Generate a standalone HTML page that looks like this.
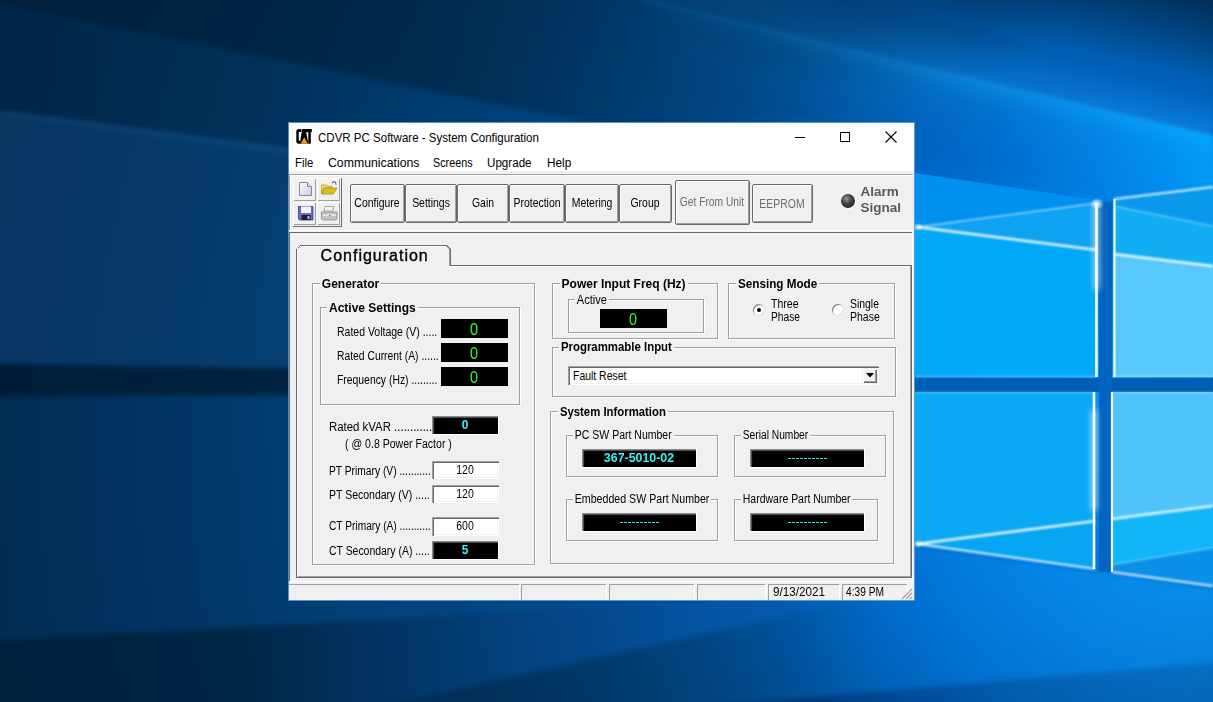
<!DOCTYPE html>
<html><head><meta charset="utf-8"><style>
html,body{margin:0;padding:0;}
body{width:1213px;height:702px;overflow:hidden;position:relative;font-family:"Liberation Sans", sans-serif;background:#03407e;}
.r{position:absolute;}
.t{position:absolute;white-space:nowrap;line-height:1;}
.btn{border:1px solid #6a6a6a;border-radius:2px;background:#f0f0f0;box-shadow:inset 1px 1px 0 #fff, inset -1px -1px 0 #a0a0a0;}
</style></head><body>
<svg class="r" style="left:-20px;top:-20px;filter:blur(2.5px)" width="1253" height="742" viewBox="-20 -20 1253 742">
<defs>
<filter id="b1" x="-5%" y="-50%" width="110%" height="200%"><feGaussianBlur stdDeviation="1"/></filter>
<radialGradient id="gBase" gradientUnits="userSpaceOnUse" cx="1105" cy="395" r="1120">
 <stop offset="0" stop-color="#0096f4"/><stop offset="0.12" stop-color="#007ee4"/><stop offset="0.25" stop-color="#0068c6"/>
 <stop offset="0.42" stop-color="#004f94"/><stop offset="0.62" stop-color="#003e74"/><stop offset="0.82" stop-color="#00335f"/><stop offset="1" stop-color="#002c54"/>
</radialGradient>
<linearGradient id="gTopDark" gradientUnits="userSpaceOnUse" x1="0" y1="0" x2="1213" y2="0">
 <stop offset="0" stop-color="#000" stop-opacity="0.28"/><stop offset="0.35" stop-color="#000" stop-opacity="0.28"/><stop offset="0.6" stop-color="#000" stop-opacity="0.12"/><stop offset="0.76" stop-color="#000" stop-opacity="0.0"/><stop offset="1" stop-color="#000" stop-opacity="0"/>
</linearGradient>
<linearGradient id="gAbD" gradientUnits="userSpaceOnUse" x1="900" y1="0" x2="1213" y2="0">
 <stop offset="0" stop-color="#000" stop-opacity="0"/><stop offset="1" stop-color="#000" stop-opacity="0.3"/>
</linearGradient>
<linearGradient id="gAbD2" gradientUnits="userSpaceOnUse" x1="1180" y1="128" x2="1210" y2="1.5">
 <stop offset="0" stop-color="#000" stop-opacity="0"/><stop offset="0.4" stop-color="#000" stop-opacity="0.03"/><stop offset="0.7" stop-color="#000" stop-opacity="0.25"/><stop offset="1" stop-color="#000" stop-opacity="0.45"/>
</linearGradient>
<linearGradient id="gBeamD" gradientUnits="userSpaceOnUse" x1="1180" y1="128" x2="1161" y2="206">
 <stop offset="0" stop-color="#10b0ff" stop-opacity="0.85"/><stop offset="0.3" stop-color="#10a0ff" stop-opacity="0.4"/><stop offset="1" stop-color="#1090ff" stop-opacity="0"/>
</linearGradient>
<linearGradient id="gBeamU" gradientUnits="userSpaceOnUse" x1="1180" y1="128" x2="1190" y2="90">
 <stop offset="0" stop-color="#1890f0" stop-opacity="0.5"/><stop offset="1" stop-color="#1890f0" stop-opacity="0"/>
</linearGradient>
<linearGradient id="gFadeL" gradientUnits="userSpaceOnUse" x1="642" y1="0" x2="1213" y2="0">
 <stop offset="0" stop-color="#fff" stop-opacity="0"/><stop offset="0.5" stop-color="#fff" stop-opacity="0.5"/><stop offset="1" stop-color="#fff" stop-opacity="1"/>
</linearGradient>
<mask id="mFadeL" maskUnits="userSpaceOnUse" x="0" y="-50" width="1213" height="400"><rect x="0" y="-50" width="1213" height="400" fill="url(#gFadeL)"/></mask>
<linearGradient id="gStreak" gradientUnits="userSpaceOnUse" x1="250" y1="0" x2="890" y2="0">
 <stop offset="0" stop-color="#0a64c8" stop-opacity="0"/><stop offset="0.7" stop-color="#0a64c8" stop-opacity="0.45"/><stop offset="1" stop-color="#0a64c8" stop-opacity="0.3"/>
</linearGradient>
<linearGradient id="gCA" gradientUnits="userSpaceOnUse" x1="0" y1="0" x2="917" y2="0">
 <stop offset="0" stop-color="#000" stop-opacity="0.14"/><stop offset="0.5" stop-color="#000" stop-opacity="0"/><stop offset="1" stop-color="#000" stop-opacity="0"/>
</linearGradient>
<linearGradient id="gShB" gradientUnits="userSpaceOnUse" x1="0" y1="0" x2="917" y2="0">
 <stop offset="0" stop-color="#1060c0" stop-opacity="0"/><stop offset="0.4" stop-color="#1060c0" stop-opacity="0.15"/><stop offset="1" stop-color="#1060c0" stop-opacity="0.1"/>
</linearGradient>
<radialGradient id="gBlob">
 <stop offset="0" stop-color="#000" stop-opacity="0.16"/><stop offset="0.6" stop-color="#000" stop-opacity="0.1"/><stop offset="1" stop-color="#000" stop-opacity="0"/>
</radialGradient>
<radialGradient id="gGlowTR" gradientUnits="userSpaceOnUse" cx="1213" cy="175" r="230">
 <stop offset="0" stop-color="#00a8ff" stop-opacity="0.75"/><stop offset="0.5" stop-color="#0098ff" stop-opacity="0.35"/><stop offset="1" stop-color="#0090ff" stop-opacity="0"/>
</radialGradient>
<linearGradient id="gBand" gradientUnits="userSpaceOnUse" x1="0" y1="0" x2="915" y2="0">
 <stop offset="0" stop-color="#000" stop-opacity="0.38"/><stop offset="0.32" stop-color="#000" stop-opacity="0.38"/><stop offset="1" stop-color="#000" stop-opacity="0.15"/>
</linearGradient>
<linearGradient id="gBot" gradientUnits="userSpaceOnUse" x1="0" y1="0" x2="1213" y2="0">
 <stop offset="0" stop-color="#000" stop-opacity="0.3"/><stop offset="0.5" stop-color="#000" stop-opacity="0.2"/><stop offset="0.72" stop-color="#000" stop-opacity="0"/><stop offset="1" stop-color="#000" stop-opacity="0"/>
</linearGradient>
<linearGradient id="gShaftA" gradientUnits="userSpaceOnUse" x1="0" y1="0" x2="915" y2="0">
 <stop offset="0" stop-color="#3a8ae0" stop-opacity="0.10"/><stop offset="1" stop-color="#3a8ae0" stop-opacity="0.05"/>
</linearGradient>
<radialGradient id="gLR" gradientUnits="userSpaceOnUse" cx="1213" cy="560" r="420">
 <stop offset="0" stop-color="#10a8ff" stop-opacity="0.55"/><stop offset="0.6" stop-color="#0898ff" stop-opacity="0.25"/><stop offset="1" stop-color="#0080ff" stop-opacity="0"/>
</radialGradient>
<filter id="b3" x="-200%" y="-20%" width="500%" height="140%"><feGaussianBlur stdDeviation="2.5"/></filter>
<linearGradient id="gAbTR" gradientUnits="userSpaceOnUse" x1="1097" y1="0" x2="1213" y2="0">
 <stop offset="0" stop-color="#0a80e4" stop-opacity="0.6"/><stop offset="1" stop-color="#00a0fa"/>
</linearGradient>
<linearGradient id="pTL" gradientUnits="userSpaceOnUse" x1="915" y1="200" x2="1097" y2="377">
 <stop offset="0" stop-color="#109ae8"/><stop offset="0.35" stop-color="#00a6f6"/><stop offset="1" stop-color="#02a8f8"/>
</linearGradient>
<linearGradient id="pTR" gradientUnits="userSpaceOnUse" x1="1113" y1="190" x2="1213" y2="377">
 <stop offset="0" stop-color="#30b8f8"/><stop offset="1" stop-color="#5ac8fc"/>
</linearGradient>
<linearGradient id="pBL" gradientUnits="userSpaceOnUse" x1="915" y1="392" x2="1095" y2="569">
 <stop offset="0" stop-color="#06a8f8"/><stop offset="1" stop-color="#00a8fa"/>
</linearGradient>
<linearGradient id="pBR" gradientUnits="userSpaceOnUse" x1="1112" y1="392" x2="1213" y2="585">
 <stop offset="0" stop-color="#48c2fa"/><stop offset="1" stop-color="#2ab0f6"/>
</linearGradient>
</defs>
<rect x="-20" y="-20" width="1253" height="742" fill="url(#gBase)"/>
<path d="M-10 -10 H1223 V247 L917 189 L-10 2 Z" fill="url(#gTopDark)"/>
<ellipse cx="870" cy="20" rx="200" ry="70" fill="url(#gBlob)"/>
<path d="M642 0 L1223 138 V-10 H642 Z" fill="url(#gAbD2)"/>
<path d="M642 0 L1223 138 L1223 300 L642 120 Z" fill="url(#gBeamD)" mask="url(#mFadeL)"/>
<path d="M642 0 L1223 138 L1223 50 L642 -40 Z" fill="url(#gBeamU)" mask="url(#mFadeL)"/>
<path d="M-10 2 L917 189 L917 227 L-10 112 Z" fill="url(#gCA)"/>
<path d="M-10 396 L915 392 L917 556 L750 600 L150 632 L-10 641 Z" fill="url(#gShB)"/>
<path d="M-10 112 L917 227 L917 377 L-10 364 Z" fill="url(#gShaftA)"/>
<path d="M-10 364 L917 377 L917 392 L-10 396 Z" fill="url(#gBand)"/>
<path d="M-10 641 L150 632 L750 600 L917 556 L1223 590 V712 H-10 Z" fill="url(#gBot)"/>
<path d="M150 632 L750 600 L890 593 L750 624 L400 702 L150 760 Z" fill="url(#gStreak)"/>
<path d="M640 712 L1223 662 V712 Z" fill="#001040" opacity="0.36"/>
<path d="M600 599 L917 548 L1223 590 V712 H600 Z" fill="url(#gLR)"/>
<g fill="none" filter="url(#b1)">
<path d="M0 112 L288 150" stroke="#3a80c8" stroke-width="2" opacity="0.5"/>
<path d="M642 0 L1213 136" stroke="#40a8ff" stroke-width="2" opacity="0.25"/>
</g>
</svg>
<svg class="r" style="left:0;top:0" width="1213" height="702" viewBox="0 0 1213 702"><defs><filter id="b1b" x="-5%" y="-50%" width="110%" height="200%"><feGaussianBlur stdDeviation="1"/></filter><filter id="b3b" filterUnits="userSpaceOnUse" x="880" y="150" width="340" height="480"><feGaussianBlur stdDeviation="3"/></filter><radialGradient id="gSpot"><stop offset="0" stop-color="#fff" stop-opacity="1"/><stop offset="0.4" stop-color="#fff" stop-opacity="0.6"/><stop offset="1" stop-color="#fff" stop-opacity="0"/></radialGradient></defs>

<path d="M950 73 L1213 136 L1213 187 L1113 200 L1097 202 L915 173 L915 65 Z" fill="url(#gGlowTR)"/>
<path d="M915 173 L1097 200 L1097 205 L915 227 Z" fill="#0090f0"/>

<path d="M915 227 L1097 203 L1097 377 L915 377 Z" fill="#02a8f8"/>
<path d="M915 227 L1097 203 L1097 250 Z" fill="#10a2f2"/>
<path d="M1113 200 L1213 187 L1213 377 L1113 377 Z" fill="#58c8fc"/>
<path d="M1113 200 L1213 187 L1213 266 L1113 254 Z" fill="#12aef4"/>
<path d="M1113 200 L1213 187 L1213 226 L1113 205 Z" fill="#0a98ec"/>
<path d="M915 392 L1095 392 L1095 569 L915 544 Z" fill="#06a6f4"/>
<path d="M915 392 L1095 392 L1095 521 L915 544 Z" fill="#0aa8f6"/>
<path d="M1112 392 L1213 392 L1213 585 L1112 571 Z" fill="#0a90e8"/>
<path d="M1112 392 L1213 392 L1213 548 L1112 565 Z" fill="#10b6f8"/>
<path d="M1112 392 L1213 392 L1213 506 L1112 519 Z" fill="#50c4fa"/>
<rect x="915" y="378" width="300" height="14" fill="#005eb4"/>
<rect x="1099" y="202" width="13" height="370" fill="#0064c0"/>
<g stroke="#ffffff" fill="none" filter="url(#b1)">
<path d="M917 227 L1097 250" stroke-width="2.6" opacity="0.9"/>
<path d="M1114 254 L1213 266" stroke-width="2.6" opacity="0.9"/>
<path d="M917 544 L1095 521" stroke-width="2.6" opacity="0.9"/>
<path d="M1112 519 L1213 506" stroke-width="2.6" opacity="0.85"/>
<path d="M917 227 L1097 203" stroke-width="1.6" opacity="0.55"/>
<path d="M1114 199 L1213 187" stroke-width="2" opacity="0.85"/>
<path d="M917 544 L1095 569" stroke-width="2" opacity="0.85"/>
<path d="M1112 572 L1213 586" stroke-width="2.2" opacity="0.9"/>
<path d="M1114 206 L1213 226" stroke-width="2" opacity="0.25"/>
<path d="M1112 565 L1213 548" stroke-width="2" opacity="0.25"/>
<path d="M915 392.5 L1095 392.5" stroke-width="1.2" opacity="0.45"/>
<path d="M1112 392.5 L1213 392.5" stroke-width="1.2" opacity="0.5"/>
<path d="M915 376.5 L1097 376.5" stroke-width="1.2" opacity="0.45"/>
<path d="M1113 376.5 L1213 376.5" stroke-width="1.2" opacity="0.5"/>
</g>
<g stroke="#ffffff" fill="none">
<path d="M1096.5 203 L1096.5 377" stroke-width="2.6" opacity="1"/>
<path d="M1114.5 199 L1114.5 377" stroke-width="2.2" opacity="0.95"/>
<path d="M1094 392 L1094 569" stroke-width="2.6" opacity="1"/>
<path d="M1112 392 L1112 572" stroke-width="2.2" opacity="0.95"/>
</g>
<g fill="none" filter="url(#b3b)">
<path d="M1096.5 205 L1096.5 290" stroke="#ffffff" stroke-width="5" opacity="0.7"/>
<path d="M1094 410 L1094 510" stroke="#ffffff" stroke-width="5" opacity="0.7"/>
</g>
<ellipse cx="1097" cy="204" rx="7" ry="6" fill="url(#gSpot)"/>
<ellipse cx="918" cy="227" rx="6" ry="4" fill="url(#gSpot)" opacity="0.8"/>
<ellipse cx="918" cy="544" rx="6" ry="4" fill="url(#gSpot)" opacity="0.8"/>
</svg>
<div class="r" style="left:289px;top:123px;width:625px;height:477px;background:#f0f0f0;box-shadow:0 0 0 1px rgba(110,175,230,0.75);"></div>
<div class="r" style="left:289px;top:123px;width:625px;height:48px;background:#fff;"></div>
<svg class="r" style="left:296px;top:129px" width="17" height="16" viewBox="0 0 17 16">
<path d="M0.3 2.5 Q0.3 0 2.8 0 H5.4 V3 H2.8 V11.8 H4.6 V14.7 H2.8 Q0.3 14.7 0.3 12.2 Z" fill="#000"/>
<path d="M3.8 14.7 L6.2 0 H9.6 L12.4 14.7 Z" fill="#000"/>
<path d="M4.6 14.7 L8.2 8.2 L11.8 14.7 Z" fill="#f39c12"/>
<path d="M9.4 0 H15.8 V3.3 H14.8 V14.7 H12.3 V3.3 H9.4 Z" fill="#000"/>
</svg>
<div class="t" style="left:317.60px;top:131.50px;font-size:12.40px;color:#000;transform:scaleX(0.930);transform-origin:left top;">CDVR PC Software - System Configuration</div>
<div class="r" style="left:795px;top:137px;width:10px;height:1px;background:#000;"></div>
<div class="r" style="left:840px;top:132px;width:8px;height:8px;border:1px solid #000;"></div>
<svg class="r" style="left:885px;top:131px" width="12" height="12" viewBox="0 0 12 12"><path d="M0.5 0.5 L11.5 11.5 M11.5 0.5 L0.5 11.5" stroke="#000" stroke-width="1.1"/></svg>
<div class="t" style="left:295.30px;top:156.59px;font-size:12.30px;color:#000;transform:scaleX(0.918);transform-origin:left top;">File</div>
<div class="t" style="left:327.50px;top:156.59px;font-size:12.30px;color:#000;transform:scaleX(0.999);transform-origin:left top;">Communications</div>
<div class="t" style="left:433.00px;top:156.59px;font-size:12.30px;color:#000;transform:scaleX(0.878);transform-origin:left top;">Screens</div>
<div class="t" style="left:487.40px;top:156.59px;font-size:12.30px;color:#000;transform:scaleX(0.945);transform-origin:left top;">Upgrade</div>
<div class="t" style="left:546.50px;top:156.59px;font-size:12.30px;color:#000;transform:scaleX(0.961);transform-origin:left top;">Help</div>
<div class="r" style="left:289px;top:174px;width:624px;height:1px;background:#a0a0a0;"></div>
<div class="r" style="left:289px;top:174px;width:1px;height:56px;background:#a0a0a0;"></div>
<div class="r" style="left:290px;top:175px;width:623px;height:1px;background:#ffffff;"></div>
<div class="r" style="left:290px;top:175px;width:1px;height:55px;background:#ffffff;"></div>
<div class="r" style="left:289px;top:230px;width:624px;height:1px;background:#ffffff;"></div>
<div class="r" style="left:293px;top:178px;width:23px;height:23px;background:#f0f0f0;box-shadow:inset 1px 1px 0 #fff, inset -1px -1px 0 #a0a0a0;"></div>
<div class="r" style="left:317px;top:178px;width:23px;height:23px;background:#f0f0f0;box-shadow:inset 1px 1px 0 #fff, inset -1px -1px 0 #a0a0a0;"></div>
<div class="r" style="left:293px;top:202px;width:23px;height:23px;background:#f0f0f0;box-shadow:inset 1px 1px 0 #fff, inset -1px -1px 0 #a0a0a0;"></div>
<div class="r" style="left:317px;top:202px;width:23px;height:23px;background:#f0f0f0;box-shadow:inset 1px 1px 0 #fff, inset -1px -1px 0 #a0a0a0;"></div>
<div class="r" style="left:293px;top:226px;width:49px;height:1px;background:#696969;"></div>
<div class="r" style="left:341px;top:178px;width:1px;height:49px;background:#696969;"></div>
<svg class="r" style="left:298px;top:181px" width="16" height="16" viewBox="0 0 16 16">
<defs><linearGradient id="gd" x1="0" y1="0" x2="1" y2="1"><stop offset="0" stop-color="#fff"/><stop offset="1" stop-color="#c8c8e8"/></linearGradient></defs>
<path d="M1.5 1.5 H9.5 L13.5 5.5 V14.5 H1.5 Z" fill="url(#gd)" stroke="#8a8a8a"/>
<path d="M9.5 1.5 V5.5 H13.5" fill="#e0e0e0" stroke="#8a8a8a"/>
</svg>
<svg class="r" style="left:321px;top:180px" width="17" height="16" viewBox="0 0 17 16">
<path d="M11 3 Q13 0.5 15 3" fill="none" stroke="#3a50a0" stroke-width="1.1"/><path d="M14 2.5 L16 4.5 L14.5 4.8 Z" fill="#3a50a0"/>
<path d="M0.5 5 H5 L6 6 H11 V8 H3 L0.5 14 Z" fill="#f4e06a" stroke="#b8a020" stroke-width="0.8"/>
<path d="M3 8 H16 L12.5 14 H0.5 Z" fill="#d8c020" stroke="#a89010" stroke-width="0.8"/>
</svg>
<svg class="r" style="left:298px;top:205px" width="16" height="16" viewBox="0 0 16 16">
<path d="M0.5 1.5 H15 V15 H1.5 L0.5 14 Z" fill="#6a6cc0" stroke="#3c3e80" stroke-width="0.8"/>
<rect x="3" y="1.5" width="10" height="6.5" fill="#f4f4f8"/>
<rect x="3.5" y="10" width="9" height="5" fill="#1e1e3c"/>
<rect x="9.5" y="11" width="2" height="3" fill="#c0c0d0"/>
</svg>
<svg class="r" style="left:321px;top:205px" width="17" height="16" viewBox="0 0 17 16">
<path d="M4 1.5 H13 L12 6 H3 Z" fill="#f0f0f0" stroke="#9a9a9a" stroke-width="0.8"/>
<path d="M0.5 7 H16 V13 Q16 15 14 15 H2.5 Q0.5 15 0.5 13 Z" fill="#c4c4c4" stroke="#8a8a8a" stroke-width="0.8"/>
<rect x="2" y="9.5" width="13" height="1.5" fill="#e8e8e8"/>
<rect x="8" y="10" width="1.5" height="1.2" fill="#30a030"/>
</svg>
<div class="r btn" style="left:350px;top:184px;width:53px;height:37px;"></div>
<div class="t" style="left:377.00px;top:196.84px;font-size:12.00px;color:#000;transform:translateX(-50%) scaleX(0.870);transform-origin:center top;">Configure</div>
<div class="r btn" style="left:405px;top:184px;width:50px;height:37px;"></div>
<div class="t" style="left:430.50px;top:196.84px;font-size:12.00px;color:#000;transform:translateX(-50%) scaleX(0.870);transform-origin:center top;">Settings</div>
<div class="r btn" style="left:457px;top:184px;width:50px;height:37px;"></div>
<div class="t" style="left:482.50px;top:196.84px;font-size:12.00px;color:#000;transform:translateX(-50%) scaleX(0.870);transform-origin:center top;">Gain</div>
<div class="r btn" style="left:509px;top:184px;width:54px;height:37px;"></div>
<div class="t" style="left:536.50px;top:196.84px;font-size:12.00px;color:#000;transform:translateX(-50%) scaleX(0.870);transform-origin:center top;">Protection</div>
<div class="r btn" style="left:565px;top:184px;width:52px;height:37px;"></div>
<div class="t" style="left:591.50px;top:196.84px;font-size:12.00px;color:#000;transform:translateX(-50%) scaleX(0.870);transform-origin:center top;">Metering</div>
<div class="r btn" style="left:619px;top:184px;width:51px;height:37px;"></div>
<div class="t" style="left:645.00px;top:196.84px;font-size:12.00px;color:#000;transform:translateX(-50%) scaleX(0.870);transform-origin:center top;">Group</div>
<div class="r btn" style="left:675px;top:180px;width:73px;height:43px;"></div>
<div class="t" style="left:712.00px;top:196.34px;font-size:12.00px;color:#6d6d6d;transform:translateX(-50%) scaleX(0.853);transform-origin:center top;">Get From Unit</div>
<div class="r btn" style="left:752px;top:184px;width:59px;height:37px;"></div>
<div class="t" style="left:782.00px;top:197.84px;font-size:12.00px;color:#6d6d6d;transform:translateX(-50%) scaleX(0.870);transform-origin:center top;">EEPROM</div>
<div class="r" style="left:841px;top:194px;width:14px;height:14px;border-radius:50%;background:radial-gradient(circle at 40% 35%, #9a9a9a 0, #4a4a4a 35%, #2a2a2a 70%, #6a6a6a 100%);box-shadow:1px 1px 1px #fff;"></div>
<div class="t" style="left:860.50px;top:185.27px;font-size:13.50px;color:#5a5a5a;font-weight:bold;">Alarm</div>
<div class="t" style="left:860.50px;top:200.57px;font-size:13.50px;color:#5a5a5a;font-weight:bold;">Signal</div>
<div class="r" style="left:289px;top:232px;width:624px;height:1px;background:#696969;"></div>
<div class="r" style="left:289px;top:232px;width:1px;height:349px;background:#696969;"></div>
<div class="r" style="left:289px;top:581px;width:624px;height:1px;background:#ffffff;"></div>
<div class="r" style="left:912px;top:232px;width:1px;height:350px;background:#ffffff;"></div>
<div class="r" style="left:296px;top:265px;width:616px;height:1px;background:#696969;"></div>
<div class="r" style="left:297px;top:266px;width:614px;height:1px;background:#ffffff;"></div>
<div class="r" style="left:297px;top:266px;width:1px;height:311px;background:#ffffff;"></div>
<div class="r" style="left:296px;top:249px;width:1px;height:329px;background:#696969;"></div>
<div class="r" style="left:297px;top:577px;width:615px;height:1px;background:#696969;"></div>
<div class="r" style="left:298px;top:576px;width:613px;height:1px;background:#a0a0a0;"></div>
<div class="r" style="left:911px;top:265px;width:1px;height:313px;background:#696969;"></div>
<div class="r" style="left:910px;top:266px;width:1px;height:311px;background:#a0a0a0;"></div>
<div class="r" style="left:297px;top:246px;width:153px;height:20px;background:#f0f0f0;"></div>
<div class="r" style="left:300px;top:245px;width:147px;height:1px;background:#696969;"></div>
<div class="r" style="left:300px;top:246px;width:147px;height:1px;background:#ffffff;"></div>
<div class="r" style="left:297px;top:249px;width:1px;height:17px;background:#ffffff;"></div>
<svg class="r" style="left:296px;top:245px" width="5" height="5"><path d="M0.5 4.5 L4.5 0.5" stroke="#696969" stroke-width="1"/></svg>
<svg class="r" style="left:446px;top:245px" width="6" height="6"><path d="M0.5 0.5 L4.5 4.5" stroke="#696969" stroke-width="1.2"/></svg>
<div class="r" style="left:450px;top:249px;width:1px;height:17px;background:#696969;"></div>
<div class="r" style="left:449px;top:249px;width:1px;height:17px;background:#a0a0a0;"></div>
<div class="r" style="left:297px;top:265px;width:152px;height:2px;background:#f0f0f0;"></div>
<div class="r" style="left:297px;top:247px;width:1px;height:20px;background:#ffffff;"></div>
<div class="t" style="left:320.60px;top:248.26px;font-size:16.00px;color:#000;letter-spacing:1.00px;-webkit-text-stroke:0.35px #000;">Configuration</div>
<div class="r" style="left:313px;top:284px;width:223px;height:1px;background:#ffffff;"></div>
<div class="r" style="left:313px;top:284px;width:1px;height:282px;background:#ffffff;"></div>
<div class="r" style="left:313px;top:565px;width:223px;height:1px;background:#ffffff;"></div>
<div class="r" style="left:535px;top:284px;width:1px;height:282px;background:#ffffff;"></div>
<div class="r" style="left:312px;top:283px;width:223px;height:1px;background:#a0a0a0;"></div>
<div class="r" style="left:312px;top:283px;width:1px;height:282px;background:#a0a0a0;"></div>
<div class="r" style="left:312px;top:564px;width:223px;height:1px;background:#a0a0a0;"></div>
<div class="r" style="left:534px;top:283px;width:1px;height:282px;background:#a0a0a0;"></div>
<div class="t" style="left:321.80px;top:277.84px;font-size:12.00px;color:#000;font-weight:bold;background:#f0f0f0;padding:0 2px;margin-left:-2px;">Generator</div>
<div class="r" style="left:321px;top:308px;width:200px;height:1px;background:#ffffff;"></div>
<div class="r" style="left:321px;top:308px;width:1px;height:98px;background:#ffffff;"></div>
<div class="r" style="left:321px;top:405px;width:200px;height:1px;background:#ffffff;"></div>
<div class="r" style="left:520px;top:308px;width:1px;height:98px;background:#ffffff;"></div>
<div class="r" style="left:320px;top:307px;width:200px;height:1px;background:#a0a0a0;"></div>
<div class="r" style="left:320px;top:307px;width:1px;height:98px;background:#a0a0a0;"></div>
<div class="r" style="left:320px;top:404px;width:200px;height:1px;background:#a0a0a0;"></div>
<div class="r" style="left:519px;top:307px;width:1px;height:98px;background:#a0a0a0;"></div>
<div class="t" style="left:329.00px;top:301.84px;font-size:12.00px;color:#000;font-weight:bold;background:#f0f0f0;padding:0 2px;margin-left:-2px;">Active Settings</div>
<div class="t" style="left:336.80px;top:326.14px;font-size:12.00px;color:#000;transform:scaleX(0.874);transform-origin:left top;">Rated Voltage (V) .....</div>
<div class="r" style="left:441px;top:319px;width:67px;height:19px;background:#000;"></div>
<div class="t" style="left:474.00px;top:321.03px;font-size:16.50px;color:#34f834;transform:translateX(-50%) scaleX(0.870);transform-origin:center top;">0</div>
<div class="t" style="left:336.80px;top:349.84px;font-size:12.00px;color:#000;transform:scaleX(0.861);transform-origin:left top;">Rated Current (A) ......</div>
<div class="r" style="left:441px;top:343px;width:67px;height:19px;background:#000;"></div>
<div class="t" style="left:474.00px;top:345.03px;font-size:16.50px;color:#34f834;transform:translateX(-50%) scaleX(0.870);transform-origin:center top;">0</div>
<div class="t" style="left:336.80px;top:373.84px;font-size:12.00px;color:#000;transform:scaleX(0.865);transform-origin:left top;">Frequency (Hz) .........</div>
<div class="r" style="left:441px;top:367px;width:67px;height:19px;background:#000;"></div>
<div class="t" style="left:474.00px;top:369.03px;font-size:16.50px;color:#34f834;transform:translateX(-50%) scaleX(0.870);transform-origin:center top;">0</div>
<div class="r" style="left:432px;top:416px;width:66px;height:18px;background:#000;"></div>
<div class="r" style="left:432px;top:416px;width:66px;height:18px;box-shadow:inset 1px 1px 0 #8a8a8a, inset 2px 2px 1px #555, 0 1px 0 #fff, 1px 0 0 #fff;"></div>
<div class="t" style="left:465.00px;top:418.54px;font-size:12.00px;color:#3ff0f0;font-weight:bold;transform:translateX(-50%);transform-origin:center top;">0</div>
<div class="t" style="left:328.50px;top:421.24px;font-size:12.00px;color:#000;transform:scaleX(0.951);transform-origin:left top;">Rated kVAR ............</div>
<div class="t" style="left:344.70px;top:437.84px;font-size:12.00px;color:#000;transform:scaleX(0.879);transform-origin:left top;">( @ 0.8 Power Factor )</div>
<div class="t" style="left:328.50px;top:464.84px;font-size:12.00px;color:#000;transform:scaleX(0.854);transform-origin:left top;">PT Primary (V) ...........</div>
<div class="r" style="left:432px;top:461px;width:67px;height:18px;background:#fff;"></div>
<div class="r" style="left:432px;top:461px;width:67px;height:18px;box-shadow:inset 1px 1px 0 #a0a0a0, inset 2px 2px 0 #696969, inset -1px -1px 0 #fff, inset -2px -2px 0 #f0f0f0;"></div>
<div class="t" style="left:465.00px;top:464.34px;font-size:12.00px;color:#000;transform:translateX(-50%) scaleX(0.870);transform-origin:center top;">120</div>
<div class="t" style="left:328.50px;top:488.54px;font-size:12.00px;color:#000;transform:scaleX(0.875);transform-origin:left top;">PT Secondary (V) .....</div>
<div class="r" style="left:432px;top:485px;width:67px;height:18px;background:#fff;"></div>
<div class="r" style="left:432px;top:485px;width:67px;height:18px;box-shadow:inset 1px 1px 0 #a0a0a0, inset 2px 2px 0 #696969, inset -1px -1px 0 #fff, inset -2px -2px 0 #f0f0f0;"></div>
<div class="t" style="left:465.00px;top:488.34px;font-size:12.00px;color:#000;transform:translateX(-50%) scaleX(0.870);transform-origin:center top;">120</div>
<div class="t" style="left:328.50px;top:520.44px;font-size:12.00px;color:#000;transform:scaleX(0.849);transform-origin:left top;">CT Primary (A) ...........</div>
<div class="r" style="left:432px;top:517px;width:67px;height:19px;background:#fff;"></div>
<div class="r" style="left:432px;top:517px;width:67px;height:19px;box-shadow:inset 1px 1px 0 #a0a0a0, inset 2px 2px 0 #696969, inset -1px -1px 0 #fff, inset -2px -2px 0 #f0f0f0;"></div>
<div class="t" style="left:465.00px;top:520.34px;font-size:12.00px;color:#000;transform:translateX(-50%) scaleX(0.870);transform-origin:center top;">600</div>
<div class="t" style="left:328.50px;top:544.54px;font-size:12.00px;color:#000;transform:scaleX(0.870);transform-origin:left top;">CT Secondary (A) .....</div>
<div class="r" style="left:432px;top:541px;width:66px;height:18px;background:#000;"></div>
<div class="r" style="left:432px;top:541px;width:66px;height:18px;box-shadow:inset 1px 1px 0 #8a8a8a, inset 2px 2px 1px #555, 0 1px 0 #fff, 1px 0 0 #fff;"></div>
<div class="t" style="left:465.00px;top:543.84px;font-size:12.00px;color:#3ff0f0;font-weight:bold;transform:translateX(-50%);transform-origin:center top;">5</div>
<div class="r" style="left:553px;top:284px;width:166px;height:1px;background:#ffffff;"></div>
<div class="r" style="left:553px;top:284px;width:1px;height:56px;background:#ffffff;"></div>
<div class="r" style="left:553px;top:339px;width:166px;height:1px;background:#ffffff;"></div>
<div class="r" style="left:718px;top:284px;width:1px;height:56px;background:#ffffff;"></div>
<div class="r" style="left:552px;top:283px;width:166px;height:1px;background:#a0a0a0;"></div>
<div class="r" style="left:552px;top:283px;width:1px;height:56px;background:#a0a0a0;"></div>
<div class="r" style="left:552px;top:338px;width:166px;height:1px;background:#a0a0a0;"></div>
<div class="r" style="left:717px;top:283px;width:1px;height:56px;background:#a0a0a0;"></div>
<div class="t" style="left:561.60px;top:277.84px;font-size:12.00px;color:#000;font-weight:bold;background:#f0f0f0;padding:0 2px;margin-left:-2px;">Power Input Freq (Hz)</div>
<div class="r" style="left:569px;top:300px;width:136px;height:1px;background:#ffffff;"></div>
<div class="r" style="left:569px;top:300px;width:1px;height:34px;background:#ffffff;"></div>
<div class="r" style="left:569px;top:333px;width:136px;height:1px;background:#ffffff;"></div>
<div class="r" style="left:704px;top:300px;width:1px;height:34px;background:#ffffff;"></div>
<div class="r" style="left:568px;top:299px;width:136px;height:1px;background:#a0a0a0;"></div>
<div class="r" style="left:568px;top:299px;width:1px;height:34px;background:#a0a0a0;"></div>
<div class="r" style="left:568px;top:332px;width:136px;height:1px;background:#a0a0a0;"></div>
<div class="r" style="left:703px;top:299px;width:1px;height:34px;background:#a0a0a0;"></div>
<div class="t" style="left:577.00px;top:293.64px;font-size:12.00px;color:#000;transform:scaleX(0.918);transform-origin:left top;background:#f0f0f0;padding:0 2px;margin-left:-2px;">Active</div>
<div class="r" style="left:600px;top:309px;width:67px;height:19px;background:#000;"></div>
<div class="t" style="left:633.00px;top:311.03px;font-size:16.50px;color:#34f834;transform:translateX(-50%) scaleX(0.870);transform-origin:center top;">0</div>
<div class="r" style="left:729px;top:284px;width:167px;height:1px;background:#ffffff;"></div>
<div class="r" style="left:729px;top:284px;width:1px;height:56px;background:#ffffff;"></div>
<div class="r" style="left:729px;top:339px;width:167px;height:1px;background:#ffffff;"></div>
<div class="r" style="left:895px;top:284px;width:1px;height:56px;background:#ffffff;"></div>
<div class="r" style="left:728px;top:283px;width:167px;height:1px;background:#a0a0a0;"></div>
<div class="r" style="left:728px;top:283px;width:1px;height:56px;background:#a0a0a0;"></div>
<div class="r" style="left:728px;top:338px;width:167px;height:1px;background:#a0a0a0;"></div>
<div class="r" style="left:894px;top:283px;width:1px;height:56px;background:#a0a0a0;"></div>
<div class="t" style="left:737.50px;top:277.84px;font-size:12.00px;color:#000;font-weight:bold;transform:scaleX(0.975);transform-origin:left top;background:#f0f0f0;padding:0 2px;margin-left:-2px;">Sensing Mode</div>
<div class="r" style="left:753px;top:304px;width:12px;height:12px;border-radius:50%;background:#fff;box-shadow:inset 1px 1px 0 #808080, inset -1px -1px 0 #e0e0e0;"></div>
<div class="r" style="left:757px;top:308px;width:4px;height:4px;border-radius:50%;background:#000;"></div>
<div class="r" style="left:832px;top:304px;width:12px;height:12px;border-radius:50%;background:#fff;box-shadow:inset 1px 1px 0 #808080, inset -1px -1px 0 #e0e0e0;"></div>
<div class="t" style="left:771.00px;top:297.64px;font-size:12.00px;color:#000;transform:scaleX(0.877);transform-origin:left top;">Three</div>
<div class="t" style="left:771.00px;top:311.34px;font-size:12.00px;color:#000;transform:scaleX(0.852);transform-origin:left top;">Phase</div>
<div class="t" style="left:850.40px;top:297.64px;font-size:12.00px;color:#000;transform:scaleX(0.869);transform-origin:left top;">Single</div>
<div class="t" style="left:850.40px;top:311.34px;font-size:12.00px;color:#000;transform:scaleX(0.873);transform-origin:left top;">Phase</div>
<div class="r" style="left:553px;top:348px;width:344px;height:1px;background:#ffffff;"></div>
<div class="r" style="left:553px;top:348px;width:1px;height:50px;background:#ffffff;"></div>
<div class="r" style="left:553px;top:397px;width:344px;height:1px;background:#ffffff;"></div>
<div class="r" style="left:896px;top:348px;width:1px;height:50px;background:#ffffff;"></div>
<div class="r" style="left:552px;top:347px;width:344px;height:1px;background:#a0a0a0;"></div>
<div class="r" style="left:552px;top:347px;width:1px;height:50px;background:#a0a0a0;"></div>
<div class="r" style="left:552px;top:396px;width:344px;height:1px;background:#a0a0a0;"></div>
<div class="r" style="left:895px;top:347px;width:1px;height:50px;background:#a0a0a0;"></div>
<div class="t" style="left:561.30px;top:341.44px;font-size:12.00px;color:#000;font-weight:bold;transform:scaleX(0.951);transform-origin:left top;background:#f0f0f0;padding:0 2px;margin-left:-2px;">Programmable Input</div>
<div class="r" style="left:568px;top:366px;width:311px;height:19px;background:#fff;"></div>
<div class="r" style="left:568px;top:366px;width:311px;height:19px;box-shadow:inset 1px 1px 0 #a0a0a0, inset 2px 2px 0 #696969, inset -1px -1px 0 #fff, inset -2px -2px 0 #f0f0f0;"></div>
<div class="r" style="left:862px;top:368px;width:15px;height:15px;background:#f0f0f0;box-shadow:inset 1px 1px 0 #f0f0f0, inset 2px 2px 0 #fff, inset -1px -1px 0 #696969, inset -2px -2px 0 #a0a0a0;"></div>
<svg class="r" style="left:866px;top:373px" width="9" height="5"><path d="M0 0 H8 L4 4.5 Z" fill="#000"/></svg>
<div class="t" style="left:572.70px;top:369.84px;font-size:12.00px;color:#000;transform:scaleX(0.870);transform-origin:left top;">Fault Reset</div>
<div class="r" style="left:551px;top:412px;width:344px;height:1px;background:#ffffff;"></div>
<div class="r" style="left:551px;top:412px;width:1px;height:153px;background:#ffffff;"></div>
<div class="r" style="left:551px;top:564px;width:344px;height:1px;background:#ffffff;"></div>
<div class="r" style="left:894px;top:412px;width:1px;height:153px;background:#ffffff;"></div>
<div class="r" style="left:550px;top:411px;width:344px;height:1px;background:#a0a0a0;"></div>
<div class="r" style="left:550px;top:411px;width:1px;height:153px;background:#a0a0a0;"></div>
<div class="r" style="left:550px;top:563px;width:344px;height:1px;background:#a0a0a0;"></div>
<div class="r" style="left:893px;top:411px;width:1px;height:153px;background:#a0a0a0;"></div>
<div class="t" style="left:560.00px;top:405.84px;font-size:12.00px;color:#000;font-weight:bold;transform:scaleX(0.946);transform-origin:left top;background:#f0f0f0;padding:0 2px;margin-left:-2px;">System Information</div>
<div class="r" style="left:567px;top:436px;width:152px;height:1px;background:#ffffff;"></div>
<div class="r" style="left:567px;top:436px;width:1px;height:42px;background:#ffffff;"></div>
<div class="r" style="left:567px;top:477px;width:152px;height:1px;background:#ffffff;"></div>
<div class="r" style="left:718px;top:436px;width:1px;height:42px;background:#ffffff;"></div>
<div class="r" style="left:566px;top:435px;width:152px;height:1px;background:#a0a0a0;"></div>
<div class="r" style="left:566px;top:435px;width:1px;height:42px;background:#a0a0a0;"></div>
<div class="r" style="left:566px;top:476px;width:152px;height:1px;background:#a0a0a0;"></div>
<div class="r" style="left:717px;top:435px;width:1px;height:42px;background:#a0a0a0;"></div>
<div class="t" style="left:575.00px;top:429.34px;font-size:12.00px;color:#000;transform:scaleX(0.876);transform-origin:left top;background:#f0f0f0;padding:0 2px;margin-left:-2px;">PC SW Part Number</div>
<div class="r" style="left:582px;top:449px;width:114px;height:18px;background:#000;"></div>
<div class="r" style="left:582px;top:449px;width:114px;height:18px;box-shadow:inset 1px 1px 0 #8a8a8a, inset 2px 2px 1px #555, 0 1px 0 #fff, 1px 0 0 #fff;"></div>
<div class="t" style="left:639.00px;top:451.50px;font-size:12.40px;color:#3ff0f0;font-weight:bold;transform:translateX(-50%);transform-origin:center top;">367-5010-02</div>
<div class="r" style="left:735px;top:436px;width:152px;height:1px;background:#ffffff;"></div>
<div class="r" style="left:735px;top:436px;width:1px;height:42px;background:#ffffff;"></div>
<div class="r" style="left:735px;top:477px;width:152px;height:1px;background:#ffffff;"></div>
<div class="r" style="left:886px;top:436px;width:1px;height:42px;background:#ffffff;"></div>
<div class="r" style="left:734px;top:435px;width:152px;height:1px;background:#a0a0a0;"></div>
<div class="r" style="left:734px;top:435px;width:1px;height:42px;background:#a0a0a0;"></div>
<div class="r" style="left:734px;top:476px;width:152px;height:1px;background:#a0a0a0;"></div>
<div class="r" style="left:885px;top:435px;width:1px;height:42px;background:#a0a0a0;"></div>
<div class="t" style="left:743.00px;top:429.34px;font-size:12.00px;color:#000;transform:scaleX(0.854);transform-origin:left top;background:#f0f0f0;padding:0 2px;margin-left:-2px;">Serial Number</div>
<div class="r" style="left:750px;top:449px;width:114px;height:18px;background:#000;"></div>
<div class="r" style="left:750px;top:449px;width:114px;height:18px;box-shadow:inset 1px 1px 0 #8a8a8a, inset 2px 2px 1px #555, 0 1px 0 #fff, 1px 0 0 #fff;"></div>
<div class="r" style="left:787.5px;top:458px;width:3px;height:1px;background:#48e0e8;"></div>
<div class="r" style="left:791.5px;top:458px;width:3px;height:1px;background:#48e0e8;"></div>
<div class="r" style="left:795.5px;top:458px;width:3px;height:1px;background:#48e0e8;"></div>
<div class="r" style="left:799.5px;top:458px;width:3px;height:1px;background:#48e0e8;"></div>
<div class="r" style="left:803.5px;top:458px;width:3px;height:1px;background:#48e0e8;"></div>
<div class="r" style="left:807.5px;top:458px;width:3px;height:1px;background:#48e0e8;"></div>
<div class="r" style="left:811.5px;top:458px;width:3px;height:1px;background:#48e0e8;"></div>
<div class="r" style="left:815.5px;top:458px;width:3px;height:1px;background:#48e0e8;"></div>
<div class="r" style="left:819.5px;top:458px;width:3px;height:1px;background:#48e0e8;"></div>
<div class="r" style="left:823.5px;top:458px;width:3px;height:1px;background:#48e0e8;"></div>
<div class="r" style="left:567px;top:500px;width:152px;height:1px;background:#ffffff;"></div>
<div class="r" style="left:567px;top:500px;width:1px;height:42px;background:#ffffff;"></div>
<div class="r" style="left:567px;top:541px;width:152px;height:1px;background:#ffffff;"></div>
<div class="r" style="left:718px;top:500px;width:1px;height:42px;background:#ffffff;"></div>
<div class="r" style="left:566px;top:499px;width:152px;height:1px;background:#a0a0a0;"></div>
<div class="r" style="left:566px;top:499px;width:1px;height:42px;background:#a0a0a0;"></div>
<div class="r" style="left:566px;top:540px;width:152px;height:1px;background:#a0a0a0;"></div>
<div class="r" style="left:717px;top:499px;width:1px;height:42px;background:#a0a0a0;"></div>
<div class="t" style="left:575.00px;top:493.34px;font-size:12.00px;color:#000;transform:scaleX(0.885);transform-origin:left top;background:#f0f0f0;padding:0 2px;margin-left:-2px;">Embedded SW Part Number</div>
<div class="r" style="left:582px;top:513px;width:114px;height:18px;background:#000;"></div>
<div class="r" style="left:582px;top:513px;width:114px;height:18px;box-shadow:inset 1px 1px 0 #8a8a8a, inset 2px 2px 1px #555, 0 1px 0 #fff, 1px 0 0 #fff;"></div>
<div class="r" style="left:619.5px;top:522px;width:3px;height:1px;background:#48e0e8;"></div>
<div class="r" style="left:623.5px;top:522px;width:3px;height:1px;background:#48e0e8;"></div>
<div class="r" style="left:627.5px;top:522px;width:3px;height:1px;background:#48e0e8;"></div>
<div class="r" style="left:631.5px;top:522px;width:3px;height:1px;background:#48e0e8;"></div>
<div class="r" style="left:635.5px;top:522px;width:3px;height:1px;background:#48e0e8;"></div>
<div class="r" style="left:639.5px;top:522px;width:3px;height:1px;background:#48e0e8;"></div>
<div class="r" style="left:643.5px;top:522px;width:3px;height:1px;background:#48e0e8;"></div>
<div class="r" style="left:647.5px;top:522px;width:3px;height:1px;background:#48e0e8;"></div>
<div class="r" style="left:651.5px;top:522px;width:3px;height:1px;background:#48e0e8;"></div>
<div class="r" style="left:655.5px;top:522px;width:3px;height:1px;background:#48e0e8;"></div>
<div class="r" style="left:735px;top:500px;width:144px;height:1px;background:#ffffff;"></div>
<div class="r" style="left:735px;top:500px;width:1px;height:42px;background:#ffffff;"></div>
<div class="r" style="left:735px;top:541px;width:144px;height:1px;background:#ffffff;"></div>
<div class="r" style="left:878px;top:500px;width:1px;height:42px;background:#ffffff;"></div>
<div class="r" style="left:734px;top:499px;width:144px;height:1px;background:#a0a0a0;"></div>
<div class="r" style="left:734px;top:499px;width:1px;height:42px;background:#a0a0a0;"></div>
<div class="r" style="left:734px;top:540px;width:144px;height:1px;background:#a0a0a0;"></div>
<div class="r" style="left:877px;top:499px;width:1px;height:42px;background:#a0a0a0;"></div>
<div class="t" style="left:743.00px;top:493.34px;font-size:12.00px;color:#000;transform:scaleX(0.874);transform-origin:left top;background:#f0f0f0;padding:0 2px;margin-left:-2px;">Hardware Part Number</div>
<div class="r" style="left:750px;top:513px;width:114px;height:18px;background:#000;"></div>
<div class="r" style="left:750px;top:513px;width:114px;height:18px;box-shadow:inset 1px 1px 0 #8a8a8a, inset 2px 2px 1px #555, 0 1px 0 #fff, 1px 0 0 #fff;"></div>
<div class="r" style="left:787.5px;top:522px;width:3px;height:1px;background:#48e0e8;"></div>
<div class="r" style="left:791.5px;top:522px;width:3px;height:1px;background:#48e0e8;"></div>
<div class="r" style="left:795.5px;top:522px;width:3px;height:1px;background:#48e0e8;"></div>
<div class="r" style="left:799.5px;top:522px;width:3px;height:1px;background:#48e0e8;"></div>
<div class="r" style="left:803.5px;top:522px;width:3px;height:1px;background:#48e0e8;"></div>
<div class="r" style="left:807.5px;top:522px;width:3px;height:1px;background:#48e0e8;"></div>
<div class="r" style="left:811.5px;top:522px;width:3px;height:1px;background:#48e0e8;"></div>
<div class="r" style="left:815.5px;top:522px;width:3px;height:1px;background:#48e0e8;"></div>
<div class="r" style="left:819.5px;top:522px;width:3px;height:1px;background:#48e0e8;"></div>
<div class="r" style="left:823.5px;top:522px;width:3px;height:1px;background:#48e0e8;"></div>
<div class="r" style="left:289px;top:584px;width:230px;height:1px;background:#a0a0a0;"></div>
<div class="r" style="left:519px;top:585px;width:1px;height:15px;background:#ffffff;"></div>
<div class="r" style="left:521px;top:584px;width:85px;height:1px;background:#a0a0a0;"></div>
<div class="r" style="left:521px;top:584px;width:1px;height:16px;background:#a0a0a0;"></div>
<div class="r" style="left:606px;top:585px;width:1px;height:15px;background:#ffffff;"></div>
<div class="r" style="left:609px;top:584px;width:85px;height:1px;background:#a0a0a0;"></div>
<div class="r" style="left:609px;top:584px;width:1px;height:16px;background:#a0a0a0;"></div>
<div class="r" style="left:694px;top:585px;width:1px;height:15px;background:#ffffff;"></div>
<div class="r" style="left:697px;top:584px;width:68px;height:1px;background:#a0a0a0;"></div>
<div class="r" style="left:697px;top:584px;width:1px;height:16px;background:#a0a0a0;"></div>
<div class="r" style="left:765px;top:585px;width:1px;height:15px;background:#ffffff;"></div>
<div class="r" style="left:768px;top:584px;width:71px;height:1px;background:#a0a0a0;"></div>
<div class="r" style="left:768px;top:584px;width:1px;height:16px;background:#a0a0a0;"></div>
<div class="r" style="left:839px;top:585px;width:1px;height:15px;background:#ffffff;"></div>
<div class="r" style="left:842px;top:584px;width:65px;height:1px;background:#a0a0a0;"></div>
<div class="r" style="left:842px;top:584px;width:1px;height:16px;background:#a0a0a0;"></div>
<div class="r" style="left:907px;top:585px;width:1px;height:15px;background:#ffffff;"></div>
<div class="t" style="left:772.70px;top:586.44px;font-size:12.00px;color:#000;transform:scaleX(0.974);transform-origin:left top;">9/13/2021</div>
<div class="t" style="left:846.00px;top:586.44px;font-size:12.00px;color:#000;transform:scaleX(0.850);transform-origin:left top;">4:39 PM</div>
<svg class="r" style="left:901px;top:588px" width="12" height="12"><path d="M11 1 L1 11 M11 5 L5 11 M11 9 L9 11" stroke="#a0a0a0" stroke-width="1.2"/></svg>
</body></html>
